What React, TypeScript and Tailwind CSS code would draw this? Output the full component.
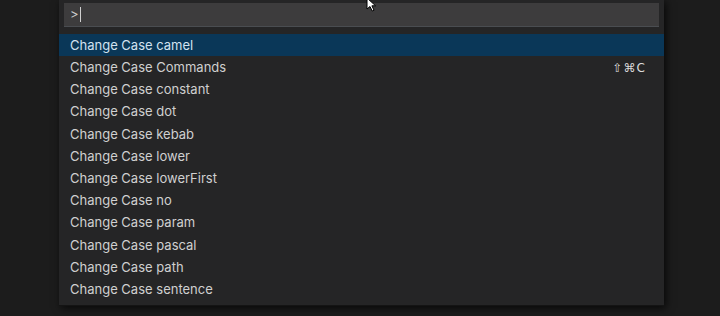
const items = [
  "camel",
  "Commands",
  "constant",
  "dot",
  "kebab",
  "lower",
  "lowerFirst",
  "no",
  "param",
  "pascal",
  "path",
  "sentence",
];

function Pointer() {
  return (
    <svg
      className="absolute left-[366px] top-[-3px]"
      width="14"
      height="16"
      viewBox="0 0 14 16"
    >
      <path
        d="M1 1 L1 12 L4 9.5 L6.2 14 L8 13.2 L5.9 8.8 L9.6 8.8 Z"
        fill="#ffffff"
        stroke="#000000"
        strokeWidth="1"
        strokeLinejoin="round"
      />
    </svg>
  );
}

export default function App() {
  return (
    <div className="relative w-[720px] h-[316px] overflow-hidden bg-[#1c1c1c] pl-[59px] font-['Inter','Liberation_Sans',sans-serif]">
      <div className="w-[605px] h-[306px] bg-[#252526] shadow-[2px_2px_8px_rgba(0,0,0,0.75)] border-b border-[#141414] pt-[3px]">
        <div className="mx-[5px] h-[24px] bg-[#3d3c3d] border-b border-[#4a4d51] flex items-center pl-[6px] text-[13px] text-[#cccccc]">
          <span>&gt;</span>
          <span className="ml-[1px] w-px h-[15px] bg-[#d0d0d0]" />
        </div>
        <div className="mt-[7px] flex flex-col">
          {items.map((name, i) => (
            <div
              key={name}
              className={
                i === 0
                  ? "h-[22.2px] flex items-center justify-between pl-[11px] pr-[18px] pt-[1px] bg-[#0a3758] text-[13px] text-[#d2e2f0]"
                  : "h-[22.2px] flex items-center justify-between pl-[11px] pr-[18px] pt-[1px] text-[13px] text-[#d0d0d0]"
              }
            >
              <span>Change Case {name}</span>
              {name === "Commands" && (
                <span className="text-[12px] text-[#dcdcdc] font-['DejaVu_Sans',sans-serif] tracking-[1px]">
                  ⇧⌘C
                </span>
              )}
            </div>
          ))}
        </div>
      </div>
      <Pointer />
    </div>
  );
}
